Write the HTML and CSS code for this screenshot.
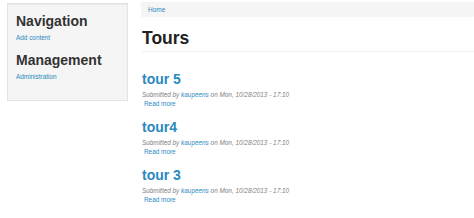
FILE: index.html
```html
<!DOCTYPE html>
<html lang="en">

<head>
    <meta charset="UTF-8">
    <meta name="viewport" content="width=device-width, initial-scale=1.0">
    <title>Tours</title>
    <link rel="stylesheet" href="styles.css">
</head>

<body>

    <div class="page">
        <aside class="sidebar">
            <section class="block">
                <h2 class="block__title">Navigation</h2>
                <ul class="menu">
                    <li><a href="#">Add content</a></li>
                </ul>
            </section>
            <section class="block">
                <h2 class="block__title">Management</h2>
                <ul class="menu">
                    <li><a href="#">Administration</a></li>
                </ul>
            </section>
        </aside>

        <div class="main">
            <ol class="breadcrumb">
                <li><a href="#">Home</a></li>
            </ol>
            <h1 class="page-header">Tours</h1>

            <article class="node">
                <h2 class="node__title"><a href="#">tour 5</a></h2>
                <div class="node__submitted">Submitted by <a href="#">kaupeens</a> on Mon, 10/28/2013 - 17:10</div>
                <ul class="node__links">
                    <li><a href="#">Read more</a></li>
                </ul>
            </article>

            <article class="node">
                <h2 class="node__title"><a href="#">tour4</a></h2>
                <div class="node__submitted">Submitted by <a href="#">kaupeens</a> on Mon, 10/28/2013 - 17:10</div>
                <ul class="node__links">
                    <li><a href="#">Read more</a></li>
                </ul>
            </article>

            <article class="node">
                <h2 class="node__title"><a href="#">tour 3</a></h2>
                <div class="node__submitted">Submitted by <a href="#">kaupeens</a> on Mon, 10/28/2013 - 17:10</div>
                <ul class="node__links">
                    <li><a href="#">Read more</a></li>
                </ul>
            </article>
        </div>
    </div>

</body>

</html>
```

FILE: styles.css
```css
body{
    margin: 0;
    font-family: "Liberation Sans", Arial, Helvetica, sans-serif;
    color: #333;
    background-color: #fff;
    overflow: hidden;
}

a{
    color: #2b8abf;
    text-decoration: none;
}

ul, ol{
    list-style: none;
    margin: 0;
    padding: 0;
}

.page{
    display: flex;
    align-items: flex-start;
    padding: 3px 0 0 7px;
    gap: 13px;
}

.sidebar{
    width: 121px;
    box-sizing: border-box;
    background-color: #f5f5f5;
    border: 1px solid #e3e3e3;
    box-shadow: inset 0 1px 1px rgba(0,0,0,.05);
    padding: 9px 8px 19px;
}

.block + .block{
    margin-top: 10px;
}

.block__title{
    margin: 0 0 4px;
    font-size: 14px;
    line-height: 16px;
    font-weight: bold;
    color: #333;
}

.menu{
    font-size: 6.4px;
    line-height: 9px;
}

.main{
    flex: 1;
    min-width: 0;
    margin-top: -1px;
}

.breadcrumb{
    background-color: #f5f5f5;
    padding: 3px 7px;
    font-size: 6.5px;
    line-height: 9px;
    border-radius: 1px;
}

.page-header{
    margin: 11px 0 0 1px;
    padding-bottom: 3px;
    border-bottom: 1px solid #eee;
    font-size: 17.5px;
    line-height: 20px;
    font-weight: bold;
    color: #222;
}

.node{
    padding-left: 1px;
}

.node:first-of-type{
    margin-top: 19px;
}

.node + .node{
    margin-top: 11px;
}

.node__title{
    margin: 0 0 3px;
    font-size: 14px;
    line-height: 16px;
    font-weight: bold;
}

.node__submitted{
    font-size: 6.4px;
    line-height: 9px;
    font-style: italic;
    color: #808080;
}

.node__links{
    padding-left: 2px;
    font-size: 6.4px;
    line-height: 9px;
}
```
